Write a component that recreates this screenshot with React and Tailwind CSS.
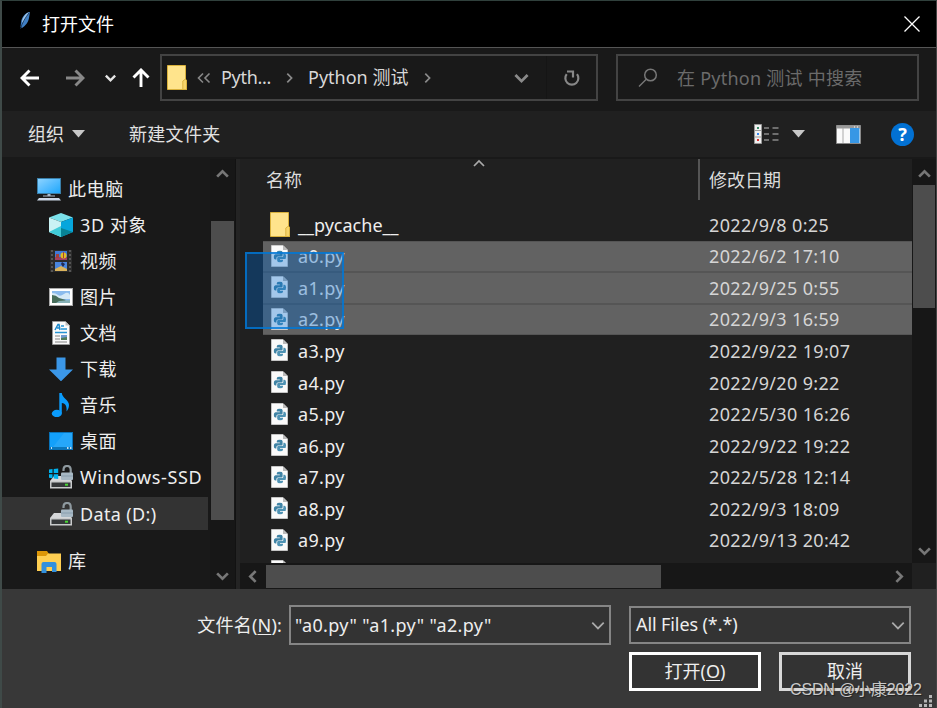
/* ── Small glyphs ── */
const Chevron = ({ dir = "down", size = 14, color = "#8a8a8a", width = 2 }) => {
  const paths = {
    down: "M2 5l5 5 5-5",
    up: "M2 9l5-5 5 5",
    left: "M9 2L4 7l5 5",
    right: "M5 2l5 5-5 5",
  };
  return (
    <svg width={size} height={size} viewBox="0 0 14 14" fill="none" stroke={color} strokeWidth={width} className="shrink-0">
      <path d={paths[dir]} />
    </svg>
  );
};

const Arrow = ({ color, className = "" }) => (
  <svg width="20" height="20" viewBox="0 0 20 20" fill="none" stroke={color} strokeWidth="2.9" className={`shrink-0 ${className}`}>
    <path d="M19 10H2.500M9.500 2.500L2 10l7.500 7.500" />
  </svg>
);

const Feather = () => (
  <svg width="12" height="20" viewBox="0 0 12 20" className="-mt-[6px]">
    <path d="M11 1C6 2 2.500 6 2 12l-.5 4 1.500 1C7 14 9 12 10 7z" fill="#3f7fc4" />
    <path d="M10 1C6 3 3 7 3 12c2-2 4-6 7-11z" fill="#9bc4ea" />
    <path d="M10 2C6 7 3 12 1.500 18" stroke="#16304f" strokeWidth=".8" fill="none" />
  </svg>
);

const Triangle = () => (
  <svg width="13" height="8" viewBox="0 0 13 8" className="shrink-0">
    <path d="M0 0h13L6.500 7.500z" fill="#c8c8c8" />
  </svg>
);

const FolderIcon = () => (
  <svg width="20" height="25" viewBox="0 0 20 25" className="shrink-0">
    <path d="M.5.5h18v14l1 1v9H.5z" fill="#ffe48c" stroke="#d9b13b" />
    <path d="M15.800 24.500V16l2.700-2 1 1.500v9z" fill="#f7d56b" stroke="#d9b13b" strokeWidth=".9" />
  </svg>
);

const PyFile = () => (
  <svg width="17" height="22" viewBox="0 0 17 22" className="shrink-0">
    <path d="M.5.5h11.500l4.500 4.500v16.500H.5z" fill="#fafafa" stroke="#d2d2d2" strokeWidth=".8" />
    <path d="M12 .5V5h4.500z" fill="#b9b9b9" />
    <path d="M5.800 7.200q0-1.400 2.900-1.400t2.900 1.400v3q0 1.200-1.200 1.200H6.900q-1.500 0-1.500 1.500v1.700H4.500q-1.700 0-1.700-2.700t1.700-2.700h4.300v-.6h-3z" fill="#3f83a5" />
    <path d="M12 15.800q0 1.500-2.900 1.500t-2.900-1.500v-2.700q0-1.200 1.200-1.200h3.500q1.500 0 1.500-1.500V8.700h1q1.700 0 1.700 2.700t-1.700 2.700H9v.6h3z" fill="#4f93b4" />
  </svg>
);

/* ── Sidebar icons, all in a 24x24 box ── */
const PcIcon = () => (
  <svg width="24" height="24" viewBox="0 0 24 24">
    <defs>
      <linearGradient id="pc" x1="0" y1="0" x2="1" y2="1">
        <stop offset="0" stopColor="#8fd4ff" />
        <stop offset=".5" stopColor="#55bcff" />
        <stop offset="1" stopColor="#1ca7fb" />
      </linearGradient>
    </defs>
    <rect x=".5" y="1.500" width="23" height="15" fill="url(#pc)" stroke="#3a7fa9" />
    <path d="M10.500 17h3v1.500H18v1H6v-1h4.500z" fill="#aebccc" />
    <path d="M2 21h20l2 2.500H0z" fill="#ccd7e6" />
  </svg>
);

const CubeIcon = () => (
  <svg width="24" height="24" viewBox="0 0 24 24">
    <path d="M12 0l12 4.500L12 9 0 4.500z" fill="#7be1ea" />
    <path d="M0 4.500L12 9v15L0 19z" fill="#c9f2f4" />
    <path d="M12 9l12-4.500V19l-12 5z" fill="#06a6dc" />
    <path d="M0 19l12-6v11z" fill="#3fcbd8" />
    <path d="M12 15l12 4-12 5z" fill="#078294" />
  </svg>
);

const VideoIcon = () => (
  <svg width="24" height="24" viewBox="0 0 24 24">
    <rect x="1" y="1" width="22" height="22" fill="#2c2c2c" />
    <path d="M3 1v22M21 1v22" stroke="#555" strokeWidth="2" strokeDasharray="2 2" />
    <rect x="6" y="2" width="12" height="9" fill="#3f79d8" />
    <rect x="6" y="13" width="12" height="9" fill="#4a86de" />
    <path d="M6 8h12v3H6z" fill="#9f3f62" />
    <circle cx="14.500" cy="6.500" r="3" fill="#e3bd22" />
    <path d="M7 5h3v4H7zM14 3h1v6h-1z" fill="#a44139" />
    <path d="M6 20l6-3 6 3v2H6z" fill="#dbb45c" />
    <path d="M13 13l3 2-2 3-2-3z" fill="#222a52" />
  </svg>
);

const PictureIcon = () => (
  <svg width="24" height="24" viewBox="0 0 24 24">
    <rect x=".5" y="3.500" width="23" height="17" fill="#fff" stroke="#a9a9a9" />
    <rect x="3" y="6" width="18" height="12" fill="#8bbbed" />
    <path d="M3 8q4 0 6 2t6-1 6 1v4H3z" fill="#d5e9f7" />
    <path d="M3 10q4 0 7 3l7 2-4 3H3z" fill="#486e5b" />
    <path d="M10 16l11-1v3H7z" fill="#86b1b6" />
  </svg>
);

const DocIcon = () => (
  <svg width="24" height="24" viewBox="0 0 24 24">
    <path d="M3.500.5h13l4 4v19h-17z" fill="#fafafa" stroke="#979797" />
    <path d="M16.500.5v4h4z" fill="#bdbdbd" />
    <path d="M6 9l3-5.500h1L11 9M8 7h3" stroke="#1c87c9" strokeWidth="1.500" fill="none" />
    <path d="M12 5h3M12 8h6M6 11.500h12" stroke="#2594d3" strokeWidth="1.500" />
    <path d="M6 15h5M6 18h5M6 21h12" stroke="#aaa" strokeWidth="1.300" />
    <rect x="12" y="14" width="6" height="5" fill="#6e9ad1" />
    <path d="M12 17l6-1v3h-6z" fill="#4f7c5a" />
  </svg>
);

const DownloadIcon = () => (
  <svg width="24" height="24" viewBox="0 0 24 24">
    <path d="M7.500.5h9v12H24L12 24.300 0 12.500h7.500z" fill="#3b97e8" />
  </svg>
);

const MusicIcon = () => (
  <svg width="24" height="24" viewBox="0 0 24 24">
    <ellipse cx="7.800" cy="20.500" rx="5" ry="3.700" fill="#0a9bfb" />
    <path d="M10.300 0h2.500c.4 5 7.200 7 7.200 12 0 3-1.200 5-2.500 6.500.6-5-.8-8-4.700-8.500v10.500h-2.500z" fill="#0a9bfb" />
  </svg>
);

const DesktopIcon = () => (
  <svg width="24" height="24" viewBox="0 0 24 24">
    <rect x=".5" y="3.500" width="23" height="17" fill="#13a0fb" stroke="#0872b9" />
    <path d="M15 4h8v14H4z" fill="#39aefa" opacity=".5" />
    <path d="M1 19h22" stroke="#0b76bb" strokeWidth="2" />
    <path d="M2 19h1M18 19h1.500M21 19h1.500" stroke="#fff" strokeWidth="1.500" />
  </svg>
);

const DriveIcon = ({ windows }) => (
  <svg width="24" height="24" viewBox="0 0 24 24">
    <path d="M5 11h14l4 5v7H1v-7z" fill="#d5d7d9" />
    <path d="M1 16h22v7.500H1z" fill="#c9cbcc" />
    <rect x="2.500" y="17.500" width="19" height="4.500" fill="#35383a" />
    <path d="M16 19.700h3" stroke="#48d635" strokeWidth="2" />
    <path d="M14.500 6V5q0-4 3.600-4t3.600 4v5" fill="none" stroke="#8e999f" strokeWidth="2.200" />
    <rect x="12" y="7.500" width="12" height="7.500" rx="1" fill="#a8b9c5" />
    <path d="M12 11h12" stroke="#899eae" />
    {windows && <path d="M-1 4.600l4.500-.5v4H-1zM4.700 3.900l4.500-.5v4.700H4.700zM-1 9.200h4.500v4L-1 12.700zM4.700 9.200h4.500v4.700l-4.500-.5z" fill="#00b3ef" />}
  </svg>
);

const LibraryIcon = () => (
  <svg width="24" height="24" viewBox="0 0 24 24">
    <path d="M0 2h10l2 3v5H0z" fill="#dd9708" />
    <path d="M0 7h9l2-2.500h13V22H0z" fill="#ffcf52" />
    <path d="M4.500 24V15q0-2 2-2h11q2 0 2 2v8H15v-5H9.500v6z" fill="#3290dd" />
  </svg>
);

const treeItems = [
  { label: "此电脑", icon: <PcIcon />, root: true },
  { label: "3D 对象", icon: <CubeIcon /> },
  { label: "视频", icon: <VideoIcon /> },
  { label: "图片", icon: <PictureIcon /> },
  { label: "文档", icon: <DocIcon /> },
  { label: "下载", icon: <DownloadIcon /> },
  { label: "音乐", icon: <MusicIcon /> },
  { label: "桌面", icon: <DesktopIcon /> },
  { label: "Windows-SSD", icon: <DriveIcon windows /> },
  { label: "Data (D:)", icon: <DriveIcon />, active: true },
];

const files = [
  { name: "__pycache__", date: "2022/9/8 0:25", folder: true },
  { name: "a0.py", date: "2022/6/2 17:10", selected: true },
  { name: "a1.py", date: "2022/9/25 0:55", selected: true },
  { name: "a2.py", date: "2022/9/3 16:59", selected: true },
  { name: "a3.py", date: "2022/9/22 19:07" },
  { name: "a4.py", date: "2022/9/20 9:22" },
  { name: "a5.py", date: "2022/5/30 16:26" },
  { name: "a6.py", date: "2022/9/22 19:22" },
  { name: "a7.py", date: "2022/5/28 12:14" },
  { name: "a8.py", date: "2022/9/3 18:09" },
  { name: "a9.py", date: "2022/9/13 20:42" },
];

const TitleBar = () => (
  <header className="flex h-[47px] shrink-0 items-center border-b border-[#555] bg-black pl-[17px] pr-4 text-white">
    <Feather />
    <h1 className="ml-[11px] flex-1 pb-px text-[18px]">打开文件</h1>
    <svg width="16" height="16" viewBox="0 0 16 16" stroke="#fff" strokeWidth="1.300">
      <path d="M.5.5l15 15M15.500.5l-15 15" />
    </svg>
  </header>
);

const AddressBar = () => (
  <div className="flex h-[63px] shrink-0 items-center bg-[#191919] pb-1">
    <div className="flex w-[158px] shrink-0 items-center pl-[18px]">
      <Arrow color="#fff" />
      <Arrow color="#888" className="ml-[25px] rotate-180" />
      <span className="ml-[19px] mr-[14px] flex"><Chevron size={13} color="#e5e5e5" width={2.6} /></span>
      <Arrow color="#fff" className="rotate-90" />
    </div>
    <div className="flex h-[47px] w-[438px] shrink-0 items-center border-2 border-[#434343] text-[#d8d8d8]">
      <span className="ml-[5px] flex"><FolderIcon /></span>
      <span className="ml-[10px] flex">
        <svg width="14" height="12" viewBox="0 0 14 12" fill="none" stroke="#888" strokeWidth="1.600">
          <path d="M6 1.500L1.500 6 6 10.500M12.500 1.500L8 6l4.500 4.500" />
        </svg>
      </span>
      <span className="ml-[10px] w-[51px] whitespace-nowrap pb-[2px] text-[18px] tracking-[-.3px]">Pyth...</span>
      <span className="ml-[11px] flex"><Chevron dir="right" size={12} /></span>
      <span className="ml-[13px] w-[102px] whitespace-nowrap pb-[2px] text-[18px]">Python 测试</span>
      <span className="ml-[11px] flex"><Chevron dir="right" size={12} /></span>
      <span className="ml-auto flex h-full items-center border-r border-[#151515] pr-[16px]"><Chevron size={17} width={2.3} /></span>
      <span className="flex w-[49px] justify-center">
        <svg width="18" height="18" viewBox="0 0 18 18" fill="none" stroke="#888" strokeWidth="2.200">
          <path d="M3.700 5.200A6.500 6.500 0 1 0 14 5.200M4 2.500h6v6" />
        </svg>
      </span>
    </div>
    <div className="ml-[18px] flex h-[47px] w-[303px] shrink-0 items-center border-2 border-[#434343] pl-[20px] text-[#6b6b6b]">
      <svg width="20" height="20" viewBox="0 0 20 20" fill="none" stroke="#777" strokeWidth="1.500">
        <circle cx="12.500" cy="7" r="5.800" />
        <path d="M8.500 11L1 18.500" />
      </svg>
      <span className="ml-[19px] whitespace-nowrap text-[18px] tracking-[.25px]">在 Python 测试 中搜索</span>
    </div>
  </div>
);

const Toolbar = () => (
  <div className="flex h-[48px] shrink-0 items-center border-b-2 border-[#191919] bg-[#202020] pl-[26px] pr-[22px] text-[18px] text-[#e2e2e2]">
    <span className="mr-[8px]">组织</span>
    <Triangle />
    <span className="ml-[44px] flex-1 tracking-[.3px]">新建文件夹</span>
    <svg width="26" height="20" viewBox="0 0 26 20">
      <path d="M.5.5h7v19h-7z" fill="#f0f0f0" stroke="#999" />
      <path d="M1 6.500h6M1 13h6" stroke="#999" />
      <path d="M3 4h2" stroke="#398b67" strokeWidth="2" />
      <path d="M3 10h2" stroke="#3687ef" strokeWidth="2" />
      <path d="M3 16h2" stroke="#dd3030" strokeWidth="2" />
      <path d="M10 4h5M18.500 4h6M10 10h5M18.500 10h6M10 16h5M18.500 16h6" stroke="#888" strokeWidth="1.300" />
    </svg>
    <span className="ml-[12px] mr-[31px] flex"><Triangle /></span>
    <svg width="25" height="19" viewBox="0 0 25 19">
      <path d="M.5.5h24v18H.5z" fill="#fafafa" stroke="#898989" />
      <path d="M1 2h23" stroke="#999" strokeWidth="3" />
      <path d="M7 3v15" stroke="#aaa" />
      <path d="M14 3h9.500v15H14z" fill="#3797e5" />
      <path d="M18 2h1M21 2h1" stroke="#fff" />
    </svg>
    <span className="ml-[30px] flex h-[23px] w-[23px] items-center justify-center rounded-full bg-[#0271d3] text-[18px] font-bold leading-none text-white">?</span>
  </div>
);

const Sidebar = () => (
  <nav className="flex w-[233px] shrink-0 bg-[#191919] text-[18px] text-[#eee]">
    <div className="w-[208px] overflow-hidden pt-[12px]">
      {treeItems.map((item) => (
        <div key={item.label} className={`flex h-[36px] w-[206px] items-center whitespace-nowrap ${item.root ? "pl-[35px]" : "pl-[47px]"}`}>
          {item.active ? (
            <div className="-ml-[47px] mt-px flex h-[33px] w-[206px] shrink-0 items-center bg-[#333] pl-[47px]">
              {item.icon}
              <span className="ml-[7px] tracking-[.35px]">{item.label}</span>
            </div>
          ) : (
            <>
              <span className="shrink-0">{item.icon}</span>
              <span className="ml-[7px] tracking-[.6px]">{item.label}</span>
            </>
          )}
        </div>
      ))}
      <div className="mt-[12px] flex h-[36px] items-center pl-[35px]">
        <LibraryIcon />
        <span className="ml-[7px]">库</span>
      </div>
    </div>
    <div className="flex w-[25px] flex-col items-center bg-[#171717] pt-[8px] pb-[6px]">
      <Chevron dir="up" size={15} width={2.5} color="#777" />
      <div className="mt-[39px] h-[299px] w-[23px] bg-[#4d4d4d]" />
      <span className="mt-auto flex"><Chevron size={15} width={2.5} color="#777" /></span>
    </div>
  </nav>
);

const FileRow = ({ file }) => (
  <div className={`ml-[23px] flex h-[31.550px] shrink-0 items-center text-[18px] ${file.selected ? "border-y border-[#555] bg-[#626262]" : ""}`}>
    <span className={`flex w-[35px] shrink-0 ${file.folder ? "pl-[7px]" : "pl-[8px] pb-px"}`}>{file.folder ? <FolderIcon /> : <PyFile />}</span>
    <span className={`w-[411px] text-[#eee] ${file.folder ? "" : "tracking-[.35px]"}`}>{file.name}</span>
    <span className="whitespace-nowrap tracking-[.35px] text-[#d5d5d5]">{file.date}</span>
  </div>
);

const FileList = () => (
  <section className="flex min-w-0 flex-1 flex-col border-l-4 border-[#242424] bg-[#202020]">
    <div className="flex min-h-0 flex-1">
      <div className="relative flex min-w-0 flex-1 flex-col overflow-hidden">
        <div className="flex h-[41px] shrink-0 text-[18px] text-[#dcdcdc]">
          <div className="relative flex w-[460px] items-center border-r-2 border-[#555] pl-[26px]">
            名称
            <span className="absolute left-[232px] top-[-2px]"><Chevron dir="up" width={1.700} color="#aaa" /></span>
          </div>
          <span className="flex items-center pl-[9px]">修改日期</span>
        </div>
        <div className="flex flex-col pt-[9px]">
          {files.map((file) => <FileRow key={file.name} file={file} />)}
          {/* next row, clipped by the scrollbar */}
          <div className="ml-[23px] flex h-[31.550px] shrink-0 items-center pb-px pl-[8px]"><PyFile /></div>
        </div>
        {/* rubber band selection */}
        <div className="absolute left-[5px] top-[93px] h-[77px] w-[99px] border-2 border-[#0078d7]/80 bg-[#0066cc]/35" />
      </div>
      <div className="flex w-[24px] shrink-0 flex-col items-center bg-[#171717] pt-[8px] pb-[5px]">
        <Chevron dir="up" size={15} width={2.5} color="#777" />
        <div className="mt-[3px] h-[123px] w-[22px] bg-[#4d4d4d]" />
        <span className="mt-auto flex"><Chevron size={15} width={2.5} color="#777" /></span>
      </div>
    </div>
    <div className="flex h-[26px] shrink-0 pr-[24px]">
      <div className="flex flex-1 items-center justify-between bg-[#171717] pl-[6px] pr-[6px]">
        <Chevron dir="left" size={15} width={2.5} color="#777" />
        <div className="ml-[5px] mr-auto h-[23px] w-[395px] bg-[#4d4d4d]" />
        <Chevron dir="right" size={15} width={2.5} color="#777" />
      </div>
    </div>
  </section>
);

const Footer = () => (
  <footer className="relative h-[119px] shrink-0 bg-[#383838] pt-[16px] text-[18px] text-[#eee]">
    <div className="flex items-center">
      <label className="w-[287px] pr-[7px] text-right tracking-[.2px]">文件名(<u className="underline-offset-2">N</u>):</label>
      <div className="flex h-[40px] w-[322px] items-center justify-between border-2 border-[#858585] bg-[#333] pl-[4px] pr-[3px]">
        <span className="whitespace-nowrap tracking-[.35px]">"a0.py" "a1.py" "a2.py"</span>
        <Chevron width={1.500} color="#aaa" size={16} />
      </div>
      <div className="ml-[18px] flex h-[38px] w-[282px] items-center justify-between border-2 border-[#858585] bg-[#333] pl-[5px] pr-[3px]">
        <span className="pb-[2px] tracking-[-.1px]">All Files (*.*)</span>
        <Chevron width={1.500} color="#aaa" size={16} />
      </div>
    </div>
    <div className="mt-[7px] flex pl-[627px]">
      <button className="h-[39px] w-[132px] border-[3px] border-white bg-[#333] pb-[2px]">打开(<u className="underline-offset-2">O</u>)</button>
      <button className="ml-[18px] h-[39px] w-[132px] border-[3px] border-[#d8d8d8] bg-[#333] pb-[2px]">取消</button>
    </div>
    <span className="absolute left-[788px] top-[89px] whitespace-nowrap font-['Liberation_Sans','Noto_Sans_CJK_SC',sans-serif] text-[16px] tracking-[-.15px] text-[#c9c9c9] [text-shadow:1px_1px_1px_#222]">CSDN @小康2022</span>
    <svg width="14" height="14" viewBox="0 0 14 14" fill="#b5b5b5" className="absolute bottom-0 right-[3px]">
      <path d="M10 1h3v3h-3zM5 5.500h3v3H5zM10 5.500h3v3h-3zM0 10h3v3H0zM5 10h3v3H5zM10 10h3v3h-3z" />
    </svg>
  </footer>
);

export default function App() {
  return (
    <main className="flex h-[708px] w-[937px] flex-col overflow-hidden border-l-2 border-r border-t border-l-[#3f4a48] border-r-[#444] border-t-[#30403c] bg-[#202020] font-['Noto_Sans','Noto_Sans_CJK_SC',sans-serif] leading-[24px]">
      <TitleBar />
      <AddressBar />
      <Toolbar />
      <div className="flex min-h-0 flex-1">
        <Sidebar />
        <div className="w-px shrink-0 bg-[#121212]" />
        <FileList />
      </div>
      <Footer />
    </main>
  );
}
